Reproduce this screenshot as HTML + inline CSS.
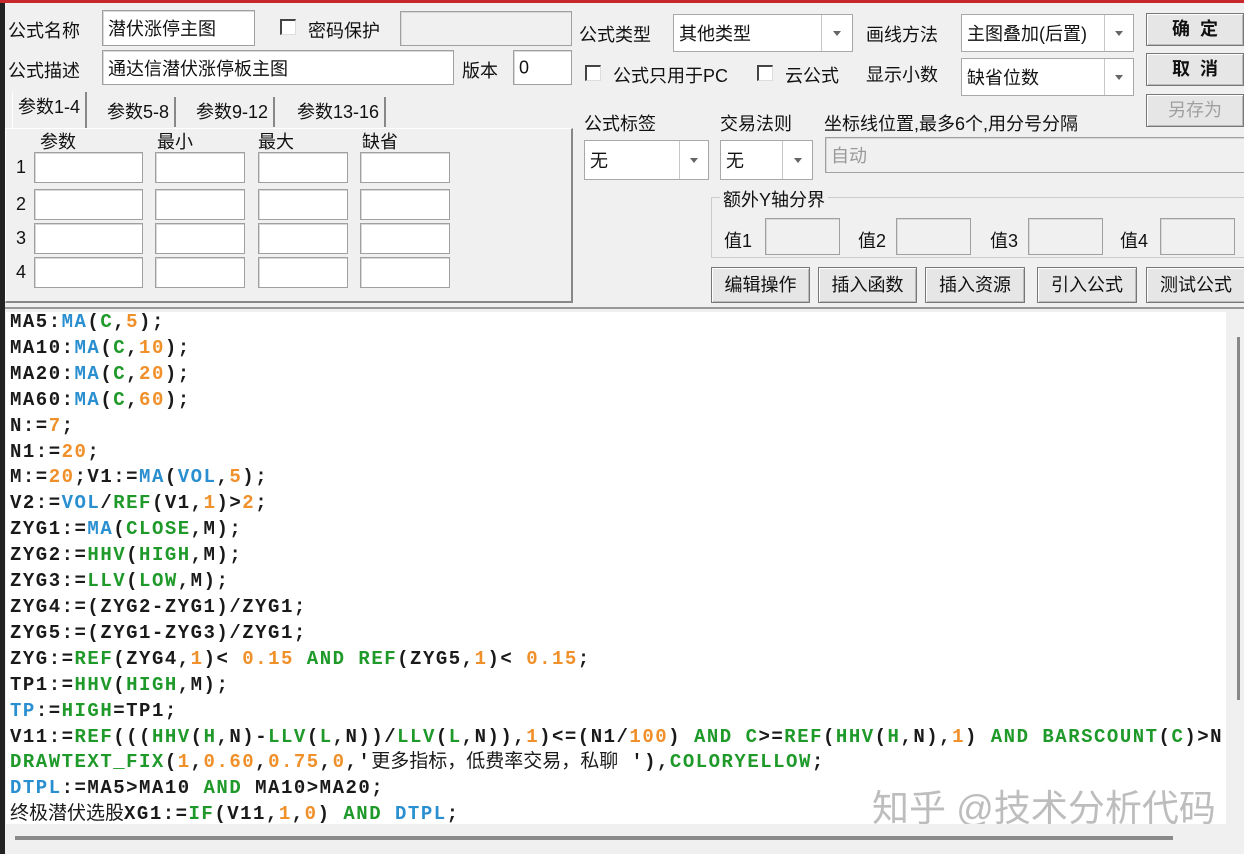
<!DOCTYPE html>
<html><head><meta charset="utf-8"><style>
*{margin:0;padding:0;box-sizing:border-box}
body{width:1244px;height:854px;overflow:hidden;background:#f0f0f0;position:relative;font-family:"Liberation Sans","Noto Sans CJK SC",sans-serif;font-size:18px;color:#111}
.a{position:absolute;white-space:nowrap}
.in{position:absolute;background:#fff;border:1px solid #a0a0a0;box-shadow:inset 1px 1px 0 #d8d8d8}
.in span{position:absolute;left:5px;top:50%;transform:translateY(-50%);white-space:nowrap}
.cb{position:absolute;width:16px;height:16px;background:#fff;border:2px solid #444;border-right:1px solid #ddd;border-bottom:1px solid #ddd}
.sel{position:absolute;background:#fff;border:1px solid #a8a8a8}
.sel span{position:absolute;left:5px;top:50%;transform:translateY(-50%);white-space:nowrap}
.sel i{position:absolute;top:0;bottom:0;right:0;border-left:1px solid #c8c8c8}
.sel i:after{content:"";position:absolute;left:50%;top:50%;margin:-2px 0 0 -4px;border:4px solid transparent;border-top:5px solid #666;border-bottom:0}
.btn{position:absolute;background:#e6e6e6;border:1px solid #777;box-shadow:inset 1px 1px 0 #fff,inset -1px -1px 0 #bbb;text-align:center;font-size:18px}
.tab{position:absolute;top:97px;height:30px;border-right:2px solid #888;padding:0 5px;line-height:30px}
.code{position:absolute;left:6px;top:312px;width:1220px;height:512px;background:#fff;overflow:hidden}
.code pre{position:absolute;left:4px;top:-2px;font-family:"Liberation Mono","Noto Sans CJK SC",monospace;font-weight:bold;font-size:19px;letter-spacing:1.5px;line-height:25.9px;color:#1a1a1a}
.b{color:#2a8fd0}.g{color:#1f9a2a}.o{color:#f0902a}
</style></head><body>
<div class="a" style="left:0;top:0;width:1244px;height:3px;background:#c8282c"></div>
<div class="a" style="left:0;top:3px;width:5px;height:851px;background:#222"></div>

<div class="a" style="left:8px;top:17px">公式名称</div>
<div class="in" style="left:102px;top:10px;width:153px;height:36px"><span>潜伏涨停主图</span></div>
<div class="cb" style="left:280px;top:19px"></div>
<div class="a" style="left:308px;top:17px">密码保护</div>
<div class="in" style="left:400px;top:11px;width:172px;height:35px;background:#f0f0f0"></div>
<div class="a" style="left:8px;top:57px">公式描述</div>
<div class="in" style="left:102px;top:50px;width:352px;height:35px"><span>通达信潜伏涨停板主图</span></div>
<div class="a" style="left:462px;top:57px">版本</div>
<div class="in" style="left:513px;top:50px;width:59px;height:35px"><span>0</span></div>

<div class="a" style="left:5px;top:128px;width:568px;height:175px;border:1px solid #fff;border-right:2px solid #888;border-bottom:2px solid #888"></div>
<div class="tab" style="left:12px;top:92px;height:36px;background:#f0f0f0;border-left:1px solid #fff">参数1-4</div>
<div class="tab" style="left:102px">参数5-8</div>
<div class="tab" style="left:191px">参数9-12</div>
<div class="tab" style="left:292px">参数13-16</div>
<div class="a" style="left:40px;top:128px">参数</div>
<div class="a" style="left:157px;top:128px">最小</div>
<div class="a" style="left:258px;top:128px">最大</div>
<div class="a" style="left:362px;top:128px">缺省</div>
<div class="a" style="left:16px;top:157px">1</div>
<div class="a" style="left:16px;top:194px">2</div>
<div class="a" style="left:16px;top:228px">3</div>
<div class="a" style="left:16px;top:262px">4</div>
<div class="in" style="left:34px;top:152px;width:109px;height:31px"></div><div class="in" style="left:155px;top:152px;width:90px;height:31px"></div><div class="in" style="left:258px;top:152px;width:90px;height:31px"></div><div class="in" style="left:360px;top:152px;width:90px;height:31px"></div>
<div class="in" style="left:34px;top:189px;width:109px;height:31px"></div><div class="in" style="left:155px;top:189px;width:90px;height:31px"></div><div class="in" style="left:258px;top:189px;width:90px;height:31px"></div><div class="in" style="left:360px;top:189px;width:90px;height:31px"></div>
<div class="in" style="left:34px;top:223px;width:109px;height:31px"></div><div class="in" style="left:155px;top:223px;width:90px;height:31px"></div><div class="in" style="left:258px;top:223px;width:90px;height:31px"></div><div class="in" style="left:360px;top:223px;width:90px;height:31px"></div>
<div class="in" style="left:34px;top:257px;width:109px;height:31px"></div><div class="in" style="left:155px;top:257px;width:90px;height:31px"></div><div class="in" style="left:258px;top:257px;width:90px;height:31px"></div><div class="in" style="left:360px;top:257px;width:90px;height:31px"></div>

<div class="a" style="left:579px;top:21px">公式类型</div>
<div class="sel" style="left:673px;top:14px;width:180px;height:38px"><span>其他类型</span><i style="width:31px"></i></div>
<div class="a" style="left:866px;top:21px">画线方法</div>
<div class="sel" style="left:961px;top:14px;width:173px;height:38px"><span>主图叠加(后置)</span><i style="width:29px"></i></div>
<div class="btn" style="left:1146px;top:13px;width:98px;height:33px;line-height:31px;font-weight:bold">确&nbsp;&nbsp;定</div>
<div class="btn" style="left:1146px;top:53px;width:98px;height:33px;line-height:31px;font-weight:bold">取&nbsp;&nbsp;消</div>
<div class="btn" style="left:1146px;top:94px;width:98px;height:33px;line-height:31px;color:#a0a0a0">另存为</div>
<div class="cb" style="left:585px;top:65px"></div>
<div class="a" style="left:613px;top:62px">公式只用于PC</div>
<div class="cb" style="left:757px;top:65px"></div>
<div class="a" style="left:785px;top:62px">云公式</div>
<div class="a" style="left:866px;top:61px">显示小数</div>
<div class="sel" style="left:961px;top:58px;width:173px;height:38px"><span>缺省位数</span><i style="width:29px"></i></div>

<div class="a" style="left:584px;top:110px">公式标签</div>
<div class="a" style="left:720px;top:110px">交易法则</div>
<div class="a" style="left:824px;top:110px">坐标线位置,最多6个,用分号分隔</div>
<div class="sel" style="left:584px;top:140px;width:125px;height:40px"><span>无</span><i style="width:29px"></i></div>
<div class="sel" style="left:720px;top:140px;width:93px;height:40px"><span>无</span><i style="width:30px"></i></div>
<div class="in" style="left:825px;top:137px;width:425px;height:36px;background:#f0f0f0"><span style="color:#999">自动</span></div>

<div class="a" style="left:711px;top:197px;width:540px;height:61px;border:1px solid #ccc;border-right:none"></div>
<div class="a" style="left:720px;top:186px;background:#f0f0f0;padding:0 3px">额外Y轴分界</div>
<div class="a" style="left:724px;top:227px">值1</div><div class="in" style="left:765px;top:218px;width:75px;height:37px;background:#f0f0f0"></div>
<div class="a" style="left:858px;top:227px">值2</div><div class="in" style="left:896px;top:218px;width:75px;height:37px;background:#f0f0f0"></div>
<div class="a" style="left:990px;top:227px">值3</div><div class="in" style="left:1028px;top:218px;width:75px;height:37px;background:#f0f0f0"></div>
<div class="a" style="left:1120px;top:227px">值4</div><div class="in" style="left:1160px;top:218px;width:75px;height:37px;background:#f0f0f0"></div>

<div class="btn" style="left:711px;top:267px;width:99px;height:36px;line-height:34px">编辑操作</div>
<div class="btn" style="left:818px;top:267px;width:99px;height:36px;line-height:34px">插入函数</div>
<div class="btn" style="left:925px;top:267px;width:100px;height:36px;line-height:34px">插入资源</div>
<div class="btn" style="left:1037px;top:267px;width:100px;height:36px;line-height:34px">引入公式</div>
<div class="btn" style="left:1146px;top:267px;width:100px;height:36px;line-height:34px">测试公式</div>

<div class="a" style="left:5px;top:307px;width:1239px;height:2px;background:#999"></div>
<div class="code"><pre>MA5:<span class="b">MA</span>(<span class="g">C</span>,<span class="o">5</span>);
MA10:<span class="b">MA</span>(<span class="g">C</span>,<span class="o">10</span>);
MA20:<span class="b">MA</span>(<span class="g">C</span>,<span class="o">20</span>);
MA60:<span class="b">MA</span>(<span class="g">C</span>,<span class="o">60</span>);
N:=<span class="o">7</span>;
N1:=<span class="o">20</span>;
M:=<span class="o">20</span>;V1:=<span class="b">MA</span>(<span class="b">VOL</span>,<span class="o">5</span>);
V2:=<span class="b">VOL</span>/<span class="g">REF</span>(V1,<span class="o">1</span>)&gt;<span class="o">2</span>;
ZYG1:=<span class="b">MA</span>(<span class="g">CLOSE</span>,M);
ZYG2:=<span class="g">HHV</span>(<span class="g">HIGH</span>,M);
ZYG3:=<span class="g">LLV</span>(<span class="g">LOW</span>,M);
ZYG4:=(ZYG2-ZYG1)/ZYG1;
ZYG5:=(ZYG1-ZYG3)/ZYG1;
ZYG:=<span class="g">REF</span>(ZYG4,<span class="o">1</span>)&lt; <span class="o">0.15</span> <span class="g">AND</span> <span class="g">REF</span>(ZYG5,<span class="o">1</span>)&lt; <span class="o">0.15</span>;
TP1:=<span class="g">HHV</span>(<span class="g">HIGH</span>,M);
<span class="b">TP</span>:=<span class="g">HIGH</span>=TP1;
V11:=<span class="g">REF</span>(((<span class="g">HHV</span>(<span class="g">H</span>,N)-<span class="g">LLV</span>(<span class="g">L</span>,N))/<span class="g">LLV</span>(<span class="g">L</span>,N)),<span class="o">1</span>)&lt;=(N1/<span class="o">100</span>) <span class="g">AND</span> <span class="g">C</span>&gt;=<span class="g">REF</span>(<span class="g">HHV</span>(<span class="g">H</span>,N),<span class="o">1</span>) <span class="g">AND</span> <span class="g">BARSCOUNT</span>(<span class="g">C</span>)&gt;N
<span class="g">DRAWTEXT_FIX</span>(<span class="o">1</span>,<span class="o">0.60</span>,<span class="o">0.75</span>,<span class="o">0</span>,'<span style="font-weight:normal;letter-spacing:0">更多指标，低费率交易，私聊</span> '),<span class="g">COLORYELLOW</span>;
<span class="b">DTPL</span>:=MA5&gt;MA10 <span class="g">AND</span> MA10&gt;MA20;
<span style="font-weight:normal;letter-spacing:0">终极潜伏选股</span>XG1:=<span class="g">IF</span>(V11,<span class="o">1</span>,<span class="o">0</span>) <span class="g">AND</span> <span class="b">DTPL</span>;</pre>
<div class="a" style="left:866px;top:466px;font-size:37px;color:#bdbdbd;font-family:'Liberation Sans','Noto Sans CJK SC',sans-serif">知乎 @技术分析代码</div>
</div>
<div class="a" style="left:1226px;top:312px;width:18px;height:512px;background:#f0f0f0"></div>
<div class="a" style="left:1237px;top:337px;width:3px;height:363px;background:#888"></div>
<div class="a" style="left:15px;top:836px;width:1158px;height:4px;background:#8a8a8a"></div>
</body></html>
